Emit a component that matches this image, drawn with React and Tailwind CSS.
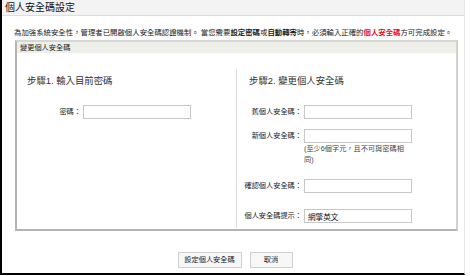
import React from "react";

const font = { fontFamily: '"Liberation Sans", "Noto Sans CJK TC", sans-serif' };

function Field({ label, value = "" }) {
  return (
    <>
      <div className="text-right text-[7.2px] leading-[14px] text-[#222] whitespace-nowrap">{label}</div>
      <input
        readOnly
        value={value}
        className="w-[108px] h-[14px] border border-[#c8c8c8] bg-white px-[3px] text-[7.6px] text-[#111] outline-none"
      />
    </>
  );
}

export default function App() {
  return (
    <div style={font} className="w-[470px] h-[276px] bg-white overflow-hidden">
      <div className="w-[465px] h-[275px] border-l-2 border-b-2 border-black border-r border-r-[#e6e6e6] flex flex-col">
        <div className="h-[16px] bg-[#f3f3f3] border-b border-[#dedede] pl-[3px] text-[10px] leading-[15px] text-[#111]">
          個人安全碼設定
        </div>

        <p className="mt-[12px] pl-[12px] text-[7.4px] leading-[10px] text-[#222] whitespace-nowrap">
          為加強系統安全性，管理者已開啟個人安全碼認證機制。 當您需要<b>設定密碼</b>或<b>自動轉寄</b>時，必須輸入正確的
          <b className="text-[#e8102a]">個人安全碼</b>方可完成設定。
        </p>

        <div className="mt-[2px] ml-[13px] w-[443px] h-[191px] border-2 border-[#b4b4b4] border-t-[#d6d6d6] border-r-[#d0d0d0] flex flex-col">
          <div className="h-[11px] bg-[#efefe9] pl-[3px] text-[7.2px] leading-[11px] text-[#222]">變更個人安全碼</div>

          <div className="flex flex-1">
            <div className="w-[219px] pt-[22px] pl-[10px]">
              <div className="text-[9.4px] leading-[12px] text-[#333]">步驟1. 輸入目前密碼</div>
              <div className="mt-[18px] grid grid-cols-[54px_108px] gap-x-[2px]">
                <Field label="密碼：" />
              </div>
            </div>

            <div className="mt-[16px] mb-[1px] border-l border-[#dcdcdc] pt-[6px] pl-[1px]">
              <div className="pl-[11px] text-[9.4px] leading-[12px] text-[#333]">步驟2. 變更個人安全碼</div>
              <div className="mt-[18px] grid grid-cols-[64px_108px] gap-x-[2px] items-start">
                <Field label="舊個人安全碼：" />
                <div className="col-span-2 h-[10px]" />
                <Field label="新個人安全碼：" />
                <div />
                <div className="w-[106px] text-[7.2px] leading-[11px] text-[#444]">(至少6個字元，且不可與密碼相同)</div>
                <div className="col-span-2 h-[14px]" />
                <Field label="確認個人安全碼：" />
                <div className="col-span-2 h-[16px]" />
                <Field label="個人安全碼提示：" value="網擎英文" />
              </div>
            </div>
          </div>
        </div>

        <div className="mt-[21px] flex justify-center gap-[8px] pl-[4px]">
          <button className="w-[64px] h-[16px] border border-[#d0d0d0] bg-[#f7f7f7] text-[7.2px] text-[#222]">設定個人安全碼</button>
          <button className="w-[43px] h-[16px] border border-[#d0d0d0] bg-[#f7f7f7] text-[7.2px] text-[#222]">取消</button>
        </div>
      </div>
    </div>
  );
}
